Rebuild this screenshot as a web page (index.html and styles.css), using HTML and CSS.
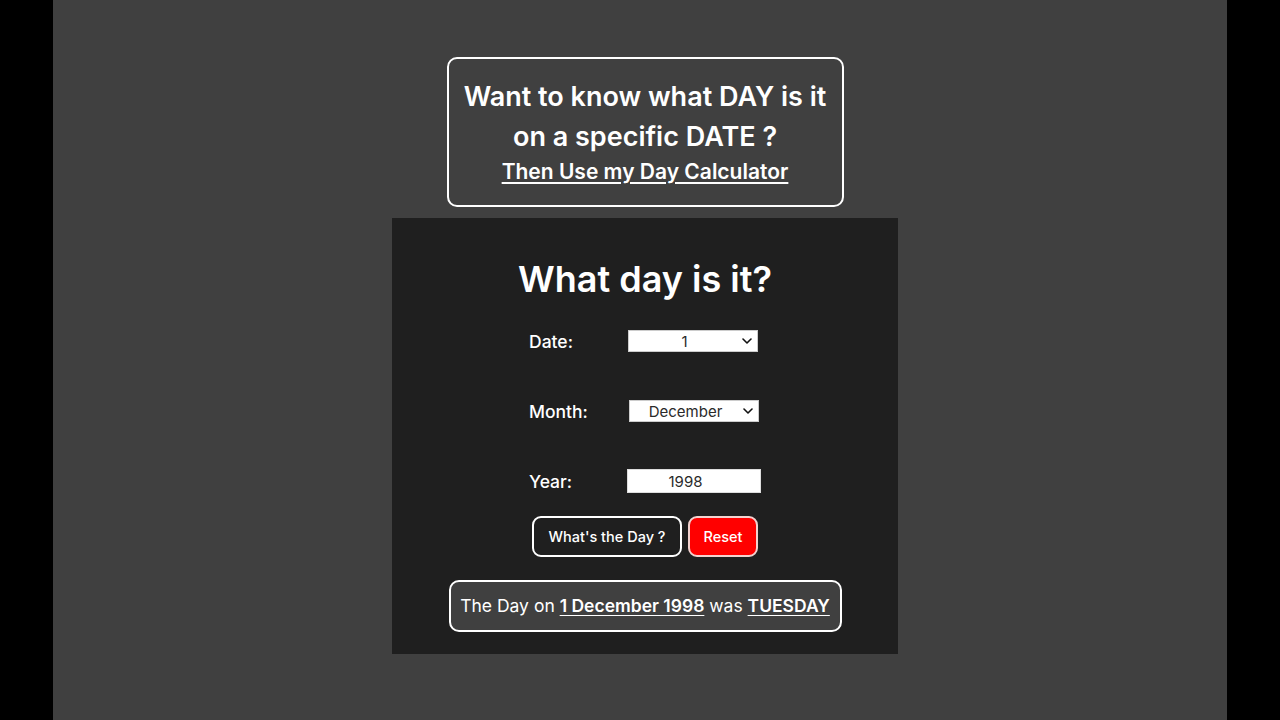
FILE: index.html
```html
<!DOCTYPE html>
<html lang="en">
<head>
<meta charset="utf-8">
<title>Day Calculator</title>
<link rel="stylesheet" href="styles.css">
</head>
<body>
<div class="stage">
  <div class="intro">
    <p class="intro-title">Want to know what DAY is it<br>on a specific DATE ?</p>
    <a class="intro-link" href="#">Then Use my Day Calculator</a>
  </div>
  <main class="panel">
    <h1 class="panel-title">What day is it?</h1>
    <form class="form">
      <div class="row">
        <label class="label" for="date">Date:</label>
        <span class="select-wrap">
          <select id="date" class="select"><option>1</option><option>2</option></select>
          <svg class="chev" viewBox="0 0 10 6" width="10" height="6"><path d="M1 1l4 4 4-4" fill="none" stroke="#111" stroke-width="1.6" stroke-linecap="round" stroke-linejoin="round"/></svg>
        </span>
      </div>
      <div class="row">
        <label class="label" for="month">Month:</label>
        <span class="select-wrap">
          <select id="month" class="select"><option>December</option><option>January</option></select>
          <svg class="chev" viewBox="0 0 10 6" width="10" height="6"><path d="M1 1l4 4 4-4" fill="none" stroke="#111" stroke-width="1.6" stroke-linecap="round" stroke-linejoin="round"/></svg>
        </span>
      </div>
      <div class="row">
        <label class="label" for="year">Year:</label>
        <input id="year" class="input" type="text" value="1998">
      </div>
      <div class="buttons">
        <button type="button" class="btn btn-go">What's the Day ?</button>
        <button type="reset" class="btn btn-reset">Reset</button>
      </div>
    </form>
    <div class="result">The Day on <u class="hl">1 December 1998</u> was <u class="hl">TUESDAY</u></div>
  </main>
</div>
</body>
</html>
```
FILE: styles.css
```css
* { box-sizing: border-box; }
html, body { margin: 0; padding: 0; }
body {
  background: #000;
  font-family: "Inter", "Open Sans", sans-serif;
  color: #fff;
}
.stage {
  width: 1174px;
  height: 720px;
  margin: 0 auto;
  background: #404040;
  display: flex;
  flex-direction: column;
  align-items: center;
  padding: 57px 0 0 10px;
}
.intro {
  width: 397px;
  height: 150px;
  border: 2px solid #fff;
  border-radius: 10px;
  text-align: center;
  padding-top: 18px;
}
.intro-title {
  margin: 0;
  font-size: 27px;
  font-weight: 600;
  line-height: 40px;
}
.intro-link {
  display: block;
  color: #fff;
  font-size: 21px;
  font-weight: 600;
  line-height: 30px;
  text-decoration: underline;
  text-underline-offset: 3px;
}
.panel {
  margin-top: 11px;
  width: 506px;
  height: 436px;
  background: #1f1f1f;
  padding-top: 36px;
  display: flex;
  flex-direction: column;
  align-items: center;
}
.panel-title {
  margin: 0;
  font-size: 36px;
  font-weight: 600;
  line-height: 50px;
}
.form {
  display: flex;
  flex-direction: column;
  align-items: center;
  margin-top: 25px;
  margin-right: 3px;
}
.row {
  display: grid;
  grid-template-columns: 99px 130px;
  align-items: center;
  height: 24px;
  width: 229px;
  margin-bottom: 46px;
}
.row:nth-child(3) { margin-bottom: 23px; }
.label {
  font-size: 17.5px;
  font-weight: 500;
  color: #fff;
}
.select-wrap {
  position: relative;
  width: 130px;
  height: 22px;
}
.row:nth-child(2) .select-wrap { margin-left: 1px; }
.select {
  appearance: none;
  -webkit-appearance: none;
  width: 130px;
  height: 22px;
  border: 1px solid #ccc;
  background: #fff;
  border-radius: 0;
  font-family: "Inter", "Open Sans", sans-serif;
  font-size: 15px;
  color: #2a2a2a;
  text-align: center;
  text-align-last: center;
  padding: 0 17px 0 0;
  margin: 0;
}
.chev {
  position: absolute;
  right: 6px;
  top: 8px;
  pointer-events: none;
}
.input {
  justify-self: start;
  margin: 0 0 0 -1px;
  width: 134px;
  height: 24px;
  border: 1px solid #ddd;
  background: #fff;
  font-family: "Inter", "Open Sans", sans-serif;
  font-size: 15px;
  color: #2a2a2a;
  text-align: center;
  padding: 0 17px 0 0;
}
.buttons {
  display: flex;
  gap: 6px;
  margin-left: 3px;
}
.btn {
  height: 41px;
  border: 2px solid #fff;
  border-radius: 9px;
  font-family: "Inter", "Open Sans", sans-serif;
  font-size: 14.5px;
  font-weight: 500;
  color: #fff;
  padding: 0;
  margin: 0;
}
.btn-go { width: 150px; background: #1f1f1f; }
.btn-reset { width: 70px; background: #ff0000; border-color: #f3d2cf; }
.result {
  margin-top: 23px;
  width: 393px;
  height: 52px;
  border: 2px solid #fff;
  border-radius: 10px;
  background: #404040;
  font-size: 17.5px;
  line-height: 48px;
  text-align: center;
}
.hl {
  font-weight: 600;
  text-underline-offset: 3px;
}
```
